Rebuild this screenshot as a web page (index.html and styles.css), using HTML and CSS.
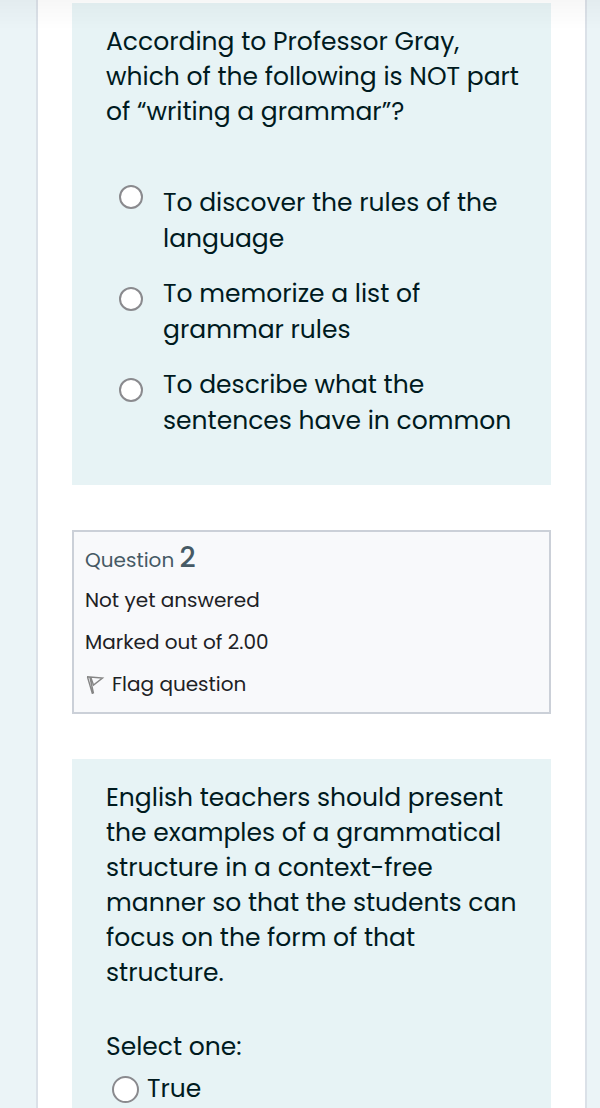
FILE: index.html
```html
<!DOCTYPE html>
<html lang="en">
<head>
    <meta charset="UTF-8">
    <meta name="viewport" content="width=device-width, initial-scale=1.0">
    <title>Quiz</title>
    <link rel="stylesheet" href="styles.css">
</head>
<body>
    <main class="quiz">
        <form class="quiz-form">
            <div class="formulation">
                <fieldset>
                    <legend>According to Professor Gray, which of the following is NOT part of “writing a grammar”?</legend>
                    <div class="answers">
                        <div class="answer">
                            <input type="radio" name="q1" id="q1a" value="0">
                            <label for="q1a">To discover the rules of the language</label>
                        </div>
                        <div class="answer">
                            <input type="radio" name="q1" id="q1b" value="1">
                            <label for="q1b">To memorize a list of grammar rules</label>
                        </div>
                        <div class="answer">
                            <input type="radio" name="q1" id="q1c" value="2">
                            <label for="q1c">To describe what the sentences have in common</label>
                        </div>
                    </div>
                </fieldset>
            </div>

            <section class="info">
                <h3>Question <span class="number">2</span></h3>
                <p>Not yet answered</p>
                <p>Marked out of 2.00</p>
                <a href="#" class="flag">
                    <svg width="20" height="20" viewBox="0 0 20 20" aria-hidden="true">
                        <path d="M2.5 3L7.5 20M5 3.5L8.5 19.5M2 2.8L17.5 4L8.5 11L6 4" fill="none" stroke="#858585" stroke-width="1.4"/>
                    </svg>
                    <span>Flag question</span>
                </a>
            </section>

            <div class="formulation">
                <fieldset>
                    <legend>English teachers should present the examples of a grammatical structure in a context-free manner so that the students can focus on the form of that structure.</legend>
                    <p class="prompt">Select one:</p>
                    <div class="choice">
                        <input type="radio" name="q2" id="q2true" value="1">
                        <label for="q2true">True</label>
                    </div>
                </fieldset>
            </div>
        </form>
    </main>
</body>
</html>
```

FILE: styles.css
```css
* {
    margin: 0;
    padding: 0;
    box-sizing: border-box;
}

body {
    font-family: Poppins, Inter, sans-serif;
    background: #ebf4f7;
    color: #001a1e;
    font-size: 25px;
    line-height: 36px;
}

body::before {
    content: "";
    position: fixed;
    top: 0;
    left: 0;
    right: 0;
    height: 30px;
    background: linear-gradient(rgba(0, 0, 0, 0.03), rgba(0, 0, 0, 0));
    pointer-events: none;
}

.quiz {
    margin: 0 13px 0 36px;
    padding: 3px 34px 0;
    background: #fff;
    border: solid #dbe1e8;
    border-width: 0 2px;
}

.quiz-form {
    display: flex;
    flex-direction: column;
    gap: 45px;
}

.formulation {
    background: #e7f3f5;
    padding: 21px 30px 46px 34px;
}

fieldset {
    border: none;
    min-width: 0;
}

legend {
    line-height: 35px;
}

.answers {
    display: flex;
    flex-direction: column;
    gap: 19px;
    margin-top: 56px;
    padding-left: 13px;
}

.answer {
    display: flex;
    align-items: flex-start;
    gap: 20px;
}

input[type="radio"] {
    appearance: none;
    flex: none;
    width: 24px;
    height: 24px;
    background: #fff;
    border: 2px solid #8a8a8e;
    border-radius: 50%;
}

.answer input {
    margin-top: 11px;
}

.answer:first-child input {
    margin-top: 0;
}

.info {
    padding: 7px 11px;
    background: #f8f9fb;
    border: 2px solid #cbd0d8;
    color: #1d2125;
    font-size: 20px;
    line-height: 42px;
}

.info h3 {
    color: #465a65;
    font-size: 20px;
    font-weight: 400;
    line-height: 38px;
}

.number {
    font-size: 28px;
    font-weight: 500;
}

.flag {
    display: flex;
    align-items: center;
    gap: 7px;
    color: inherit;
    text-decoration: none;
}

.prompt {
    margin-top: 39px;
}

.choice {
    display: flex;
    align-items: center;
    gap: 8px;
    margin-top: 6px;
    padding-left: 6px;
}

.choice input[type="radio"] {
    width: 27px;
    height: 27px;
}
```
